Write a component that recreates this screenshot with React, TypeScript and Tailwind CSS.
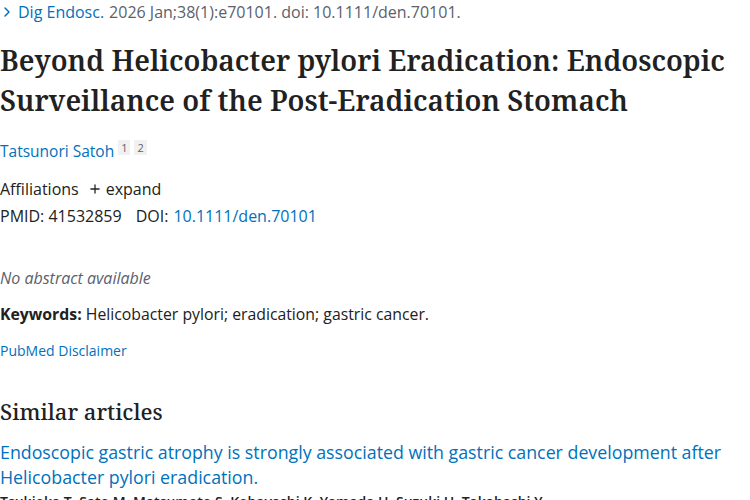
import { ChevronRight, Plus } from 'lucide-react'

const sans = "font-['Open_Sans',sans-serif]"
const serif = "font-['Noto_Serif',serif]"

export default function App() {
  return (
    <div className={`h-[500px] w-[750px] overflow-hidden bg-white text-[#212121] ${sans}`}>
      {/* citation line */}
      <div className="flex h-[20px] items-center pt-[4px] text-[16px] leading-[20px]">
        <ChevronRight className="-ml-[1px] mr-[3px] h-[16px] w-[16px] text-[#0071bc]" strokeWidth={2.2} />
        <span className="text-[#0071bc]">Dig Endosc.</span>
        <span className="ml-[5px] text-[#5b616b]">2026 Jan;38(1):e70101. doi: 10.1111/den.70101.</span>
      </div>

      <h1 className={`mt-[20px] text-[28.2px] font-semibold leading-[40px] ${serif}`}>
        Beyond Helicobacter pylori Eradication: Endoscopic
        <br />
        Surveillance of the Post-Eradication Stomach
      </h1>

      <div className="mt-[20px] flex h-[24px] items-center text-[15.5px]">
        <span className="text-[#0071bc]">Tatsunori Satoh</span>
        <span className="-mt-[10px] ml-[4px] flex gap-[4px] text-[11px] leading-[15px] text-[#5b616b]">
          <span className="bg-[#f1f1f1] px-[3px]">1</span>
          <span className="bg-[#f1f1f1] px-[3px]">2</span>
        </span>
      </div>

      <div className="mt-[13px] flex h-[24px] items-center text-[16px]">
        <span>Affiliations</span>
        <Plus className="ml-[9px] mr-[4px] h-[14px] w-[14px]" strokeWidth={2.2} />
        <span>expand</span>
      </div>

      <div className="mt-[3px] flex h-[24px] items-center text-[16px]">
        <span>PMID: 41532859</span>
        <span className="ml-[14px]">DOI:</span>
        <span className="ml-[5px] text-[#0071bc]">10.1111/den.70101</span>
      </div>

      <p className="mt-[38px] h-[24px] text-[16px] italic leading-[24px] text-[#5b616b]">No abstract available</p>

      <p className="mt-[12px] h-[24px] text-[15.8px] leading-[24px]">
        <strong className="font-bold">Keywords:</strong> Helicobacter pylori; eradication; gastric cancer.
      </p>

      <p className="mt-[15px] h-[20px] text-[14px] leading-[20px] text-[#0071bc]">PubMed Disclaimer</p>

      <h2 className={`mt-[35px] h-[30px] text-[22px] font-medium leading-[30px] ${serif}`}>Similar articles</h2>

      <p className="mt-[14px] text-[17.8px] leading-[25px] text-[#0071bc]">
        Endoscopic gastric atrophy is strongly associated with gastric cancer development after
        <br />
        Helicobacter pylori eradication.
      </p>

      <p className="mt-[2px] text-[14px] font-semibold leading-[20px]">
        Tsukioka T, Sato M, Matsumoto S, Kobayashi K, Yamada H, Suzuki H, Takahashi Y.
      </p>
    </div>
  )
}
